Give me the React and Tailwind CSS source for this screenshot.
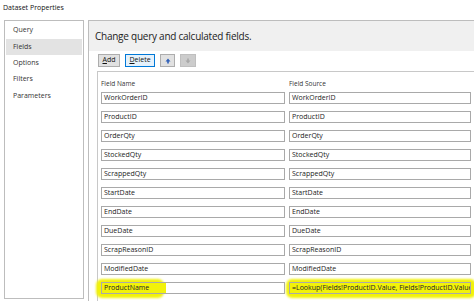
import React from "react";

const fields = [
  "WorkOrderID",
  "ProductID",
  "OrderQty",
  "StockedQty",
  "ScrappedQty",
  "StartDate",
  "EndDate",
  "DueDate",
  "ScrapReasonID",
  "ModifiedDate",
];

const nav = ["Query", "Fields", "Options", "Filters", "Parameters"];

function Row({ name, source, highlight }) {
  return (
    <div className="relative flex h-[19px] items-start gap-[4px] pl-[3px]">
      {highlight && (
        <>
          <div className="absolute left-[-2px] top-[-3px] h-[19px] w-[68px] rounded-[6px] bg-[#f2f20a] blur-[1px]" />
          <div className="absolute left-[188px] top-[-3px] h-[19px] w-[190px] rounded-[6px] bg-[#f2f20a] blur-[1px]" />
        </>
      )}
      <div className="relative flex h-[12px] w-[184px] items-center border border-[#a9a9a9] bg-white pl-[2px] text-[7px] text-[#222]">
        {highlight && <div className="absolute left-0 top-0 h-full w-[64px] bg-[#f2f20a]" />}
        <span className="relative">{name}</span>
      </div>
      <div className={`relative flex h-[12px] w-[182px] items-center overflow-hidden whitespace-nowrap border border-[#a9a9a9] pl-[2px] text-[7px] text-[#222] ${highlight ? "bg-[#f2f20a]" : "bg-white"}`}>
        {source}
      </div>
    </div>
  );
}

export default function App() {
  return (
    <div
      className="h-[301px] w-[474px] overflow-hidden bg-white text-black"
      style={{ fontFamily: '"Open Sans", "Noto Sans", sans-serif' }}
    >
      <div className="flex h-[20px] items-center pl-[3px] pb-[4px] text-[7px] text-[#111]">
        Dataset Properties
      </div>
      <div className="flex">
        <div className="ml-[4px] h-[279px] w-[80px] border border-[#bdbdbd] pt-[1.5px] pl-[1px] pr-[1px]">
          {nav.map((n) => (
            <div
              key={n}
              className={`flex h-[16.3px] items-center pl-[7px] text-[7px] text-[#333] ${n === "Fields" ? "bg-[#e3e3e3]" : ""}`}
            >
              {n}
            </div>
          ))}
        </div>
        <div className="ml-[4px] flex h-[281px] flex-1 flex-col border-l border-t border-[#bdbdbd] bg-white">
          <div className="flex h-[36px] items-center bg-[#f0f0f0] pl-[6px] text-[10px] tracking-[-0.25px] text-[#222]">
            Change query and calculated fields.
          </div>
          <div className="flex items-center gap-[5px] pl-[9px] pt-[3px]">
            <div className="flex h-[13px] w-[22px] items-center justify-center border border-[#adadad] bg-[#e1e1e1] text-[7px] text-[#111]">
              <span><u>A</u>dd</span>
            </div>
            <div className="flex h-[13px] w-[30px] items-center justify-center border border-[#0078d7] bg-[#e5f1fb] text-[7px] text-[#111]">
              <span><u>D</u>elete</span>
            </div>
            <div className="flex h-[13px] w-[15px] items-center justify-center border border-[#adadad] bg-[#e1e1e1]">
              <svg width="6" height="6" viewBox="0 0 6 6">
                <path d="M3 0.5 L5.5 3.5 L3.8 3.5 L3.8 5.5 L2.2 5.5 L2.2 3.5 L0.5 3.5 Z" fill="#2e5fb8" />
              </svg>
            </div>
            <div className="flex h-[13px] w-[16px] items-center justify-center border border-[#bfbfbf] bg-[#cccccc]">
              <svg width="6" height="6" viewBox="0 0 6 6">
                <path d="M3 5.5 L5.5 2.5 L3.8 2.5 L3.8 0.5 L2.2 0.5 L2.2 2.5 L0.5 2.5 Z" fill="#a8a8a8" />
              </svg>
            </div>
          </div>
          <div className="ml-[8px] mt-[4px] flex-1 border-l border-t border-[#c8c8c8] pt-[4px]">
            <div className="flex h-[16px] items-center text-[6.5px] text-[#333]">
              <div className="w-[191px] pl-[3px]">Field Name</div>
              <div>Field Source</div>
            </div>
            {fields.map((f) => (
              <Row key={f} name={f} source={f} />
            ))}
            <Row
              name="ProductName"
              source="=Lookup(Fields!ProductID.Value, Fields!ProductID.Value"
              highlight
            />
          </div>
        </div>
      </div>
    </div>
  );
}
